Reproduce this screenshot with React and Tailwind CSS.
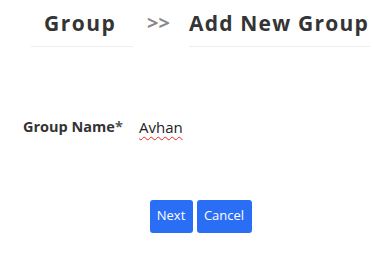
export default function App() {
  return (
    <div className="w-[374px] h-[259px] bg-white font-['Open_Sans',sans-serif] text-[#333]">
      <div className="flex items-start pt-[8px]">
        <div className="ml-[31px] w-[102px] border-b border-[#eee] pb-[8px] pl-[13px] text-[21px] font-bold tracking-[1.5px] leading-[30px] text-[#343434]">
          Group
        </div>
        <div className="w-[56px] pl-[14px] text-[20px] font-bold leading-[30px] text-[#888]">&gt;&gt;</div>
        <div className="w-[181px] border-b border-[#eee] pb-[8px] text-[21px] font-bold tracking-[1.2px] leading-[30px] text-[#343434] whitespace-nowrap">
          Add New Group
        </div>
      </div>

      <div className="mt-[69px] flex items-center">
        <label className="ml-[23px] w-[116px] text-[14.5px] font-bold text-[#333]">
          Group Name<span className="text-[#555]">*</span>
        </label>
        <span className="text-[15px] text-[#222] underline decoration-wavy decoration-[#e22] decoration-[1px] underline-offset-[3px]">
          Avhan
        </span>
      </div>

      <div className="mt-[61px] flex justify-center gap-[4px] pl-[27px]">
        <button className="h-[33px] w-[43px] rounded-[3px] bg-[#2a6ef6] text-[13px] font-medium text-white">
          Next
        </button>
        <button className="h-[33px] w-[55px] rounded-[3px] bg-[#2a6ef6] text-[13px] font-medium text-white">
          Cancel
        </button>
      </div>
    </div>
  )
}
